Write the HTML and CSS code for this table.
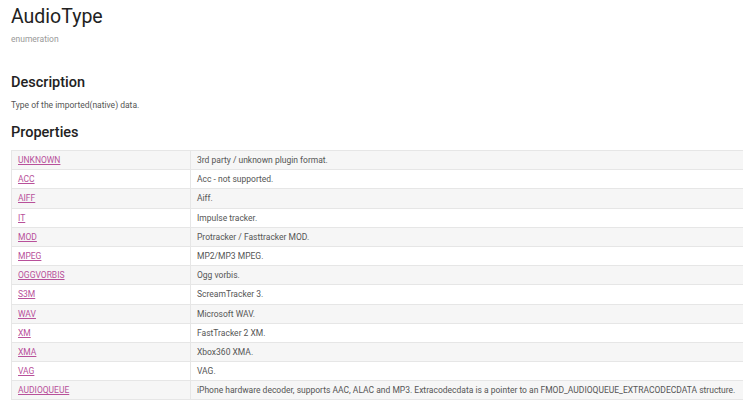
FILE: index.html
```html
<!DOCTYPE html>
<html>
<head>
<meta charset="utf-8">
<link rel="stylesheet" href="styles.css">
</head>
<body>
<div class="page">
  <h1 class="title">AudioType</h1>
  <div class="kind">enumeration</div>
  <h2 class="section">Description</h2>
  <p class="desc">Type of the imported(native) data.</p>
  <h2 class="section props">Properties</h2>
  <table class="props-table">
    <tr><td class="name"><a href="#">UNKNOWN</a></td><td class="info">3rd party / unknown plugin format.</td></tr>
    <tr><td class="name"><a href="#">ACC</a></td><td class="info">Acc - not supported.</td></tr>
    <tr><td class="name"><a href="#">AIFF</a></td><td class="info">Aiff.</td></tr>
    <tr><td class="name"><a href="#">IT</a></td><td class="info">Impulse tracker.</td></tr>
    <tr><td class="name"><a href="#">MOD</a></td><td class="info">Protracker / Fasttracker MOD.</td></tr>
    <tr><td class="name"><a href="#">MPEG</a></td><td class="info">MP2/MP3 MPEG.</td></tr>
    <tr><td class="name"><a href="#">OGGVORBIS</a></td><td class="info">Ogg vorbis.</td></tr>
    <tr><td class="name"><a href="#">S3M</a></td><td class="info">ScreamTracker 3.</td></tr>
    <tr><td class="name"><a href="#">WAV</a></td><td class="info">Microsoft WAV.</td></tr>
    <tr><td class="name"><a href="#">XM</a></td><td class="info">FastTracker 2 XM.</td></tr>
    <tr><td class="name"><a href="#">XMA</a></td><td class="info">Xbox360 XMA.</td></tr>
    <tr><td class="name"><a href="#">VAG</a></td><td class="info">VAG.</td></tr>
    <tr><td class="name"><a href="#">AUDIOQUEUE</a></td><td class="info">iPhone hardware decoder, supports AAC, ALAC and MP3. Extracodecdata is a pointer to an FMOD_AUDIOQUEUE_EXTRACODECDATA structure.</td></tr>
  </table>
</div>
</body>
</html>
```
FILE: styles.css
```css
html, body {
  margin: 0;
  padding: 0;
  background: #fff;
  overflow: hidden;
}
body {
  font-family: Roboto, "Liberation Sans", sans-serif;
  color: #333;
}
.page {
  padding: 3px 0 0 11px;
  width: 900px;
}
.title {
  margin: 0;
  font-size: 19.5px;
  font-weight: 400;
  line-height: 28px;
  color: #222;
}
.kind {
  font-size: 8.5px;
  color: #999;
  line-height: 12px;
  margin-top: 2px;
}
.section {
  margin: 29px 0 0 0;
  font-size: 14.5px;
  font-weight: 500;
  line-height: 18px;
  color: #222;
}
.section.props {
  margin-top: 13px;
}
.desc {
  margin: 7px 0 0 0;
  font-size: 8.5px;
  line-height: 12px;
  color: #555;
}
.props-table {
  margin-top: 8px;
  border-collapse: collapse;
  font-size: 8.5px;
  white-space: nowrap;
}
.props-table td {
  border: 1px solid #e6e6e6;
  height: 19.2px;
  padding: 0 6px;
  box-sizing: border-box;
  vertical-align: middle;
  line-height: 12px;
}
.props-table tr:nth-child(odd) td {
  background: #f6f6f6;
}
.name {
  width: 179px;
  min-width: 179px;
}
.name a {
  color: #b8509a;
  text-decoration: underline;
}
.info {
  color: #555;
  width: 560px;
}
```
